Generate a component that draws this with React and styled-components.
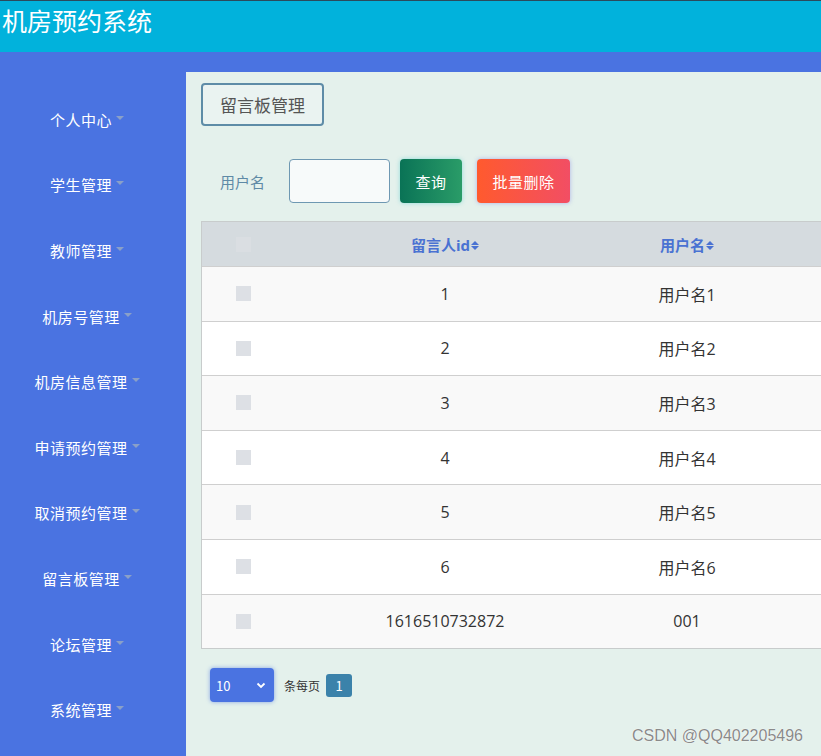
import React from 'react';
import styled, { createGlobalStyle } from 'styled-components';

const GlobalStyle = createGlobalStyle`
  html, body {
    margin: 0;
    padding: 0;
    background: #4a73e1;
    font-family: "Microsoft YaHei", "Noto Sans CJK SC", "Noto Sans", sans-serif;
  }
  * { box-sizing: border-box; }
`;

const Page = styled.div`
  width: 821px;
  height: 756px;
  overflow: hidden;
  display: flex;
  flex-direction: column;
  background: #4a73e1;
  position: relative;
`;

const Header = styled.div`
  height: 52px;
  flex-shrink: 0;
  background: #01b2dc;
  border-top: 1px solid #2b4a5c;
  display: flex;
  align-items: flex-start;
  padding: 4px 0 0 2px;
`;

const Title = styled.div`
  color: #fff;
  font-size: 25px;
  line-height: 30px;
`;

const Body = styled.div`
  flex: 1;
  display: flex;
  padding-top: 20px;
`;

const Sidebar = styled.div`
  width: 186px;
  flex-shrink: 0;
  display: flex;
  flex-direction: column;
  padding-top: 15px;
`;

const NavItem = styled.div`
  height: 65.6px;
  display: flex;
  align-items: center;
  justify-content: center;
  padding-right: 12px;
  color: #fff;
  font-size: 15px;
  line-height: 20px;
  letter-spacing: 0.5px;
  gap: 4px;
`;

const Caret = styled.span`
  display: inline-block;
  width: 0;
  height: 0;
  border-left: 4px solid transparent;
  border-right: 4px solid transparent;
  border-top: 4px solid #8aa0c8;
  margin-top: -4px;
`;

const Main = styled.div`
  flex: 1;
  background: #e4f1ec;
  padding: 11px 0 0 15px;
  display: flex;
  flex-direction: column;
`;

const Crumb = styled.div`
  width: 123px;
  height: 43px;
  border: 2px solid #5e8ca7;
  border-radius: 4px;
  display: flex;
  align-items: center;
  justify-content: center;
  font-size: 17px;
  color: #555;
  background: #eaf3f1;
`;

const SearchRow = styled.div`
  display: flex;
  align-items: center;
  margin-top: 33px;
  height: 44px;
`;

const Label = styled.span`
  color: #5e8aa6;
  font-size: 15px;
  margin-left: 19px;
  width: 69px;
`;

const Input = styled.div`
  width: 101px;
  height: 44px;
  border: 1px solid #6e98b2;
  border-radius: 4px;
  background: #f7fafa;
`;

const Btn = styled.button`
  height: 44px;
  border: none;
  border-radius: 4px;
  color: #fff;
  font-size: 15px;
  font-family: inherit;
  letter-spacing: 0.5px;
  padding: 0;
  width: ${p => p.$w}px;
  margin-left: ${p => p.$ml}px;
  background: ${p => p.$bg};
  box-shadow: 0 0 4px ${p => p.$glow};
`;

const Table = styled.div`
  margin-top: 18px;
  border: 1px solid #c8cccc;
  border-right: none;
  background: #fff;
`;

const Row = styled.div`
  display: grid;
  grid-template-columns: 122px 242px 242px 1fr;
  align-items: center;
  height: ${p => (p.$head ? 44 : 54.6)}px;
  background: ${p => (p.$head ? '#d5dbdf' : p.$odd ? '#f9f9f9' : '#fff')};
  border-top: ${p => (p.$head ? 'none' : '1px solid #cfcfcf')};
`;

const Cell = styled.div`
  text-align: center;
  font-family: "Open Sans", "Noto Sans CJK SC", sans-serif;
  font-size: ${p => (p.$head ? 15 : 16)}px;
  color: ${p => (p.$head ? '#4a72d2' : '#333')};
  font-weight: ${p => (p.$head ? 'bold' : 'normal')};
`;

const Check = styled.div`
  width: 15px;
  height: 15px;
  background: #dde0e5;
  margin-left: 34px;
  opacity: ${p => (p.$faint ? 0.6 : 1)};
`;

const Sort = styled.span`
  display: inline-flex;
  flex-direction: column;
  gap: 1px;
  vertical-align: middle;
  margin-left: 1px;
  margin-top: -2px;
  &::before,
  &::after {
    content: '';
    width: 0;
    height: 0;
    border-left: 4px solid transparent;
    border-right: 4px solid transparent;
  }
  &::before { border-bottom: 4px solid #4a72d2; }
  &::after { border-top: 4px solid #4a72d2; }
`;

const Pager = styled.div`
  display: flex;
  align-items: center;
  margin-top: 19px;
  padding-left: 9px;
`;

const Select = styled.div`
  width: 64px;
  height: 34px;
  background: #4a73e1;
  border-radius: 4px;
  box-shadow: 0 0 4px rgba(74, 115, 225, 0.6);
  color: #fff;
  font-size: 13px;
  display: flex;
  align-items: center;
  justify-content: space-between;
  padding: 0 8px 0 6px;
`;

const PerPage = styled.span`
  font-size: 12px;
  color: #333;
  margin-left: 10px;
`;

const PageNo = styled.div`
  width: 26px;
  height: 23px;
  background: #3b82aa;
  border-radius: 3px;
  color: #fff;
  font-size: 13px;
  display: flex;
  align-items: center;
  justify-content: center;
  margin-left: 6px;
`;

const Watermark = styled.div`
  position: absolute;
  left: 632px;
  top: 727px;
  font-family: "Liberation Sans", Arial, sans-serif;
  font-size: 16px;
  color: #8a8a8a;
  text-shadow: 0 0 1px #fff, 0 0 1px #fff;
`;

const navs = ['个人中心', '学生管理', '教师管理', '机房号管理', '机房信息管理', '申请预约管理', '取消预约管理', '留言板管理', '论坛管理', '系统管理'];

const rows = [
  ['1', '用户名1'],
  ['2', '用户名2'],
  ['3', '用户名3'],
  ['4', '用户名4'],
  ['5', '用户名5'],
  ['6', '用户名6'],
  ['1616510732872', '001']
];

export default function App() {
  return (
    <Page>
      <GlobalStyle />
      <Header>
        <Title>机房预约系统</Title>
      </Header>
      <Body>
        <Sidebar>
          {navs.map(n => (
            <NavItem key={n}>
              {n}
              <Caret />
            </NavItem>
          ))}
        </Sidebar>
        <Main>
          <Crumb>留言板管理</Crumb>
          <SearchRow>
            <Label>用户名</Label>
            <Input />
            <Btn $w={62} $ml={10} $bg="linear-gradient(90deg, #0a7356, #2a9c68)" $glow="rgba(60,200,200,0.5)">查询</Btn>
            <Btn $w={93} $ml={15} $bg="linear-gradient(90deg, #ff5a2e, #f24e64)" $glow="rgba(120,120,230,0.5)">批量删除</Btn>
          </SearchRow>
          <Table>
            <Row $head>
              <Check $faint />
              <Cell $head>留言人id<Sort /></Cell>
              <Cell $head>用户名<Sort /></Cell>
              <div />
            </Row>
            {rows.map((r, i) => (
              <Row key={r[0]} $odd={i % 2 === 0}>
                <Check />
                <Cell>{r[0]}</Cell>
                <Cell>{r[1]}</Cell>
                <div />
              </Row>
            ))}
          </Table>
          <Pager>
            <Select>
              <span>10</span>
              <svg width="10" height="10" viewBox="0 0 10 10">
                <path d="M1.5 3.5 L5 7 L8.5 3.5" fill="none" stroke="#fff" strokeWidth="1.8" />
              </svg>
            </Select>
            <PerPage>条每页</PerPage>
            <PageNo>1</PageNo>
          </Pager>
        </Main>
      </Body>
      <Watermark>CSDN @QQ402205496</Watermark>
    </Page>
  );
}
